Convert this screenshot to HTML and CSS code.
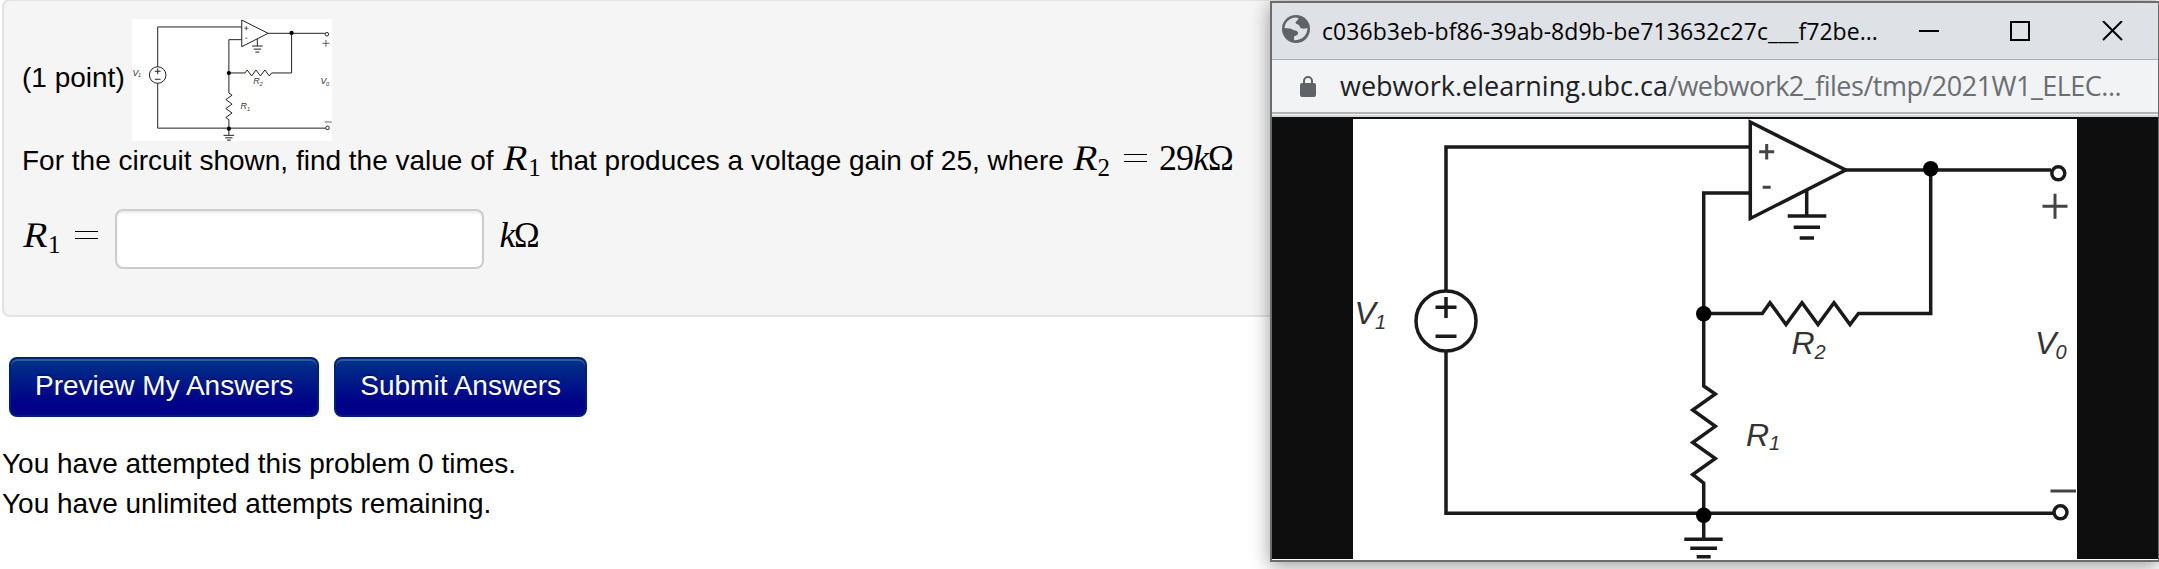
FILE: index.html
```html
<!DOCTYPE html>
<html lang="en">
<head>
    <meta charset="UTF-8">
    <meta name="viewport" content="width=device-width, initial-scale=1.0">
    <title>WeBWorK Problem</title>
    <link rel="stylesheet" href="styles.css">
</head>
<body>

    <!-- Problem -->
    <div class="problem">
        <div class="points">
            <span>(1 point)</span>
            <svg class="thumb" viewBox="0 0 724 440">
                <g id="circuit">
                    <g class="wire">
                        <path d="M93 172V28H397M397 74H350.700V267L362.300 275L339.700 291L362.300 307.300L339.700 323.500L362.300 339.500L339.700 355.500L350.700 364V420"/>
                        <path d="M93 232V394.300H700"/>
                        <path d="M397.300 3V99.500L492.700 51Z"/>
                        <path d="M492.700 51H698M577.700 51V194.500H505.500L497 205.500L481 183.700L465 205.500L449 183.700L433 205.500L417 183.700L409.300 194.500H350.700"/>
                        <path d="M453.700 71V97M434.700 97H473.300M440.700 108.300H467M446.700 119H461"/>
                        <path d="M331.300 420.300H369.700M337.300 429.300H364M343.700 437.700H357.700"/>
                        <circle cx="93" cy="202" r="30"/>
                        <path d="M82.500 188.300H103.500M93 178V199M82.500 217.300H103.500"/>
                        <circle class="pin" cx="705.300" cy="54.300" r="6.500"/>
                        <circle class="pin" cx="707.500" cy="393.300" r="6.500"/>
                    </g>
                    <g class="sign">
                        <path d="M406.200 32.700H421.200M413.700 25V40.500M409.700 68.300H417.700"/>
                        <path d="M689.500 87.300H714.500M702 74.800V99.800M697.500 372H723"/>
                    </g>
                    <circle cx="350.700" cy="194.700" r="7.700"/>
                    <circle cx="350.700" cy="396.300" r="7.700"/>
                    <circle cx="577.700" cy="49.700" r="7.700"/>
                    <g class="label">
                        <text x="1.500" y="205">V<tspan class="sub" x="22" y="209.500">1</tspan></text>
                        <text x="438.500" y="235">R<tspan class="sub" x="461.500" y="240">2</tspan></text>
                        <text x="393" y="326.500">R<tspan class="sub" x="416" y="331">1</tspan></text>
                        <text x="682" y="235">V<tspan class="sub" x="702.500" y="240">0</tspan></text>
                    </g>
                </g>
            </svg>
        </div>
        <p class="question">For the circuit shown, find the value of <span class="math m1"><i class="r">R</i><sub>1</sub></span> that produces a voltage gain of 25, where <span class="math"><i class="r">R</i><sub>2</sub><span class="eq"></span>29<i>k</i><span class="ohm">Ω</span></span></p>
        <div class="answer">
            <span class="math"><i class="r">R</i><sub>1</sub><span class="eq"></span></span>
            <input type="text" class="answer-input">
            <span class="math"><i>k</i><span class="ohm">Ω</span></span>
        </div>
    </div>

    <div class="buttons">
        <button class="btn">Preview My Answers</button>
        <button class="btn">Submit Answers</button>
    </div>

    <div class="attempts">
        <p>You have attempted this problem 0 times.</p>
        <p>You have unlimited attempts remaining.</p>
    </div>

    <!-- Popup window -->
    <div class="popup">
        <div class="titlebar">
            <svg class="globe" viewBox="0 0 28 28">
                <circle cx="14" cy="14" r="14"/>
                <path d="M2.500 13C3 7.500 7.500 3 13.500 2.600L16.500 3C16 5.500 14 6 13.500 7.500C13.500 9.500 17 9 17.500 11C18 13.500 21 14.500 25.400 13C25.600 20 20 25.500 12 25.300V21.500C14 20.500 16.500 20 16 17.500C15 15 12.500 16 10.500 14.500C9 13.300 6 13.500 2.500 13Z"/>
            </svg>
            <span class="title">c036b3eb-bf86-39ab-8d9b-be713632c27c___f72be...</span>
            <svg class="controls" viewBox="0 0 204 20">
                <path d="M0 10H20M92 1H110V19H92ZM184 0L203 19M203 0L184 19"/>
            </svg>
        </div>
        <div class="urlbar">
            <svg class="lock" viewBox="0 0 16 21"><path d="M4 8V5a4 4 0 0 1 8 0v3"/><rect y="7" width="16" height="14" rx="2"/></svg>
            <span class="url">webwork.elearning.ubc.ca<span class="path">/webwork2_files/tmp/2021W1_ELEC...</span></span>
        </div>
        <div class="viewer">
            <svg class="picture" viewBox="0 0 724 440"><use href="#circuit"/></svg>
        </div>
    </div>

</body>
</html>
```
FILE: styles.css
```css
* {
    margin: 0;
    padding: 0;
    box-sizing: border-box;
}
body {
    background: #fff;
    color: #000;
    font-family: Arial, "Liberation Sans", sans-serif;
    font-size: 28px;
    line-height: 40px;
    height: 569px;
    overflow: hidden;
    position: relative;
}

/* Circuit */
.wire {
    fill: none;
    stroke: #1a1a1a;
    stroke-width: 3.5;
}
.wire .pin {
    fill: #fff;
}
.sign {
    stroke: #444;
    stroke-width: 3;
}
.label {
    font-family: "Liberation Sans", sans-serif;
    font-style: italic;
    font-size: 32px;
    fill: #333;
}
.sub {
    font-size: 20px;
}

/* Problem */
.problem {
    height: 318px;
    margin: -1px 0 0 2px;
    padding: 18px 18px;
    background: #f5f5f5;
    border: 2px solid #e3e3e3;
    border-radius: 8px;
}
.points {
    display: flex;
    align-items: center;
    gap: 7px;
    height: 122px;
}
.points span {
    padding-bottom: 4px;
}
.thumb {
    width: 200px;
    height: 122px;
    background: #fff;
}
.question {
    margin-top: -1px;
    white-space: nowrap;
}
.math {
    display: inline-flex;
    align-items: baseline;
    font-family: "Liberation Serif", serif;
    font-size: 36px;
    line-height: 36px;
    letter-spacing: -1px;
}
.m1 {
    width: 40px;
    margin-left: 1px;
}
.math .r {
    font-style: normal;
    width: 26px;
    transform: skewX(-12deg) scaleX(1.04);
    transform-origin: 0 80%;
}
.math sub {
    font-size: 25px;
    line-height: 20px;
    position: relative;
    top: 6px;
    vertical-align: baseline;
}
.ohm {
    transform: scaleX(0.96);
    transform-origin: 0 0;
}
.eq {
    width: 23px;
    height: 8px;
    margin: 0 12px 0 15px;
    border-top: 1.500px solid #000;
    border-bottom: 1.500px solid #000;
    align-self: center;
}
.answer {
    display: flex;
    align-items: center;
    margin-top: 28px;
}
.answer .math {
    padding-bottom: 8px;
}
.answer-input {
    width: 369px;
    height: 60px;
    margin: 0 16px 0 5px;
    background: #fff;
    border: 2px solid #ccc;
    border-radius: 8px;
    box-shadow: inset 0 2px 2px rgba(0, 0, 0, 0.075);
}

/* Buttons */
.buttons {
    display: flex;
    gap: 15px;
    margin: 40px 0 0 9px;
}
.btn {
    height: 60px;
    padding: 0 24px 2px;
    font-family: inherit;
    font-size: 28px;
    color: #fff;
    text-shadow: 0 -2px 0 rgba(0, 0, 0, 0.25);
    background: linear-gradient(#003388, #000088 80%);
    border: 2px solid #002070;
    border-radius: 8px;
    box-shadow: inset 0 2px 0 rgba(255, 255, 255, 0.2), 0 2px 4px rgba(0, 0, 0, 0.05);
}
.attempts {
    margin: 27px 0 0 2px;
}

/* Popup */
.popup {
    position: absolute;
    left: 1270px;
    top: 1px;
    width: 889px;
    height: 561px;
    border: 2px solid #6b6d6d;
    border-right-width: 1px;
    box-shadow: 0 4px 18px rgba(0, 0, 0, 0.4);
    font-family: "Open Sans", "Noto Sans", sans-serif;
    white-space: nowrap;
}
.titlebar {
    display: flex;
    align-items: center;
    height: 57px;
    padding-left: 10px;
    background: #dee1e6;
    border-bottom: 1px solid #adafb2;
}
.globe {
    width: 28px;
    height: 28px;
    margin-bottom: 4px;
    fill: #5f6368;
}
.globe path {
    fill: #dee1e6;
}
.title {
    width: 557px;
    margin-left: 12px;
    font-size: 23px;
    letter-spacing: 0.050px;
}
.controls {
    width: 204px;
    height: 20px;
    margin: 0 0 0 40px;
    fill: none;
    stroke: #000;
    stroke-width: 2;
}
.urlbar {
    display: flex;
    align-items: center;
    height: 57px;
    padding: 0 0 3px 28px;
    background: #f1f3f4;
    border-bottom: 2px solid #d6d8da;
    box-shadow: inset 0 -1px 0 #f1f3f4, inset 0 -3px 0 #b1b3b4;
}
.lock {
    width: 16px;
    height: 21px;
    fill: #5f6368;
}
.lock path {
    fill: none;
    stroke: #5f6368;
    stroke-width: 2;
}
.url {
    margin-left: 24px;
    font-size: 27px;
    color: #202124;
}
.url .path {
    color: #6b6e72;
    letter-spacing: -0.500px;
}
.viewer {
    height: 442px;
    padding: 2px 0 0 81px;
    background: #0e0e0e;
}
.picture {
    display: block;
    width: 724px;
    height: 440px;
    background: #fff;
}
```
